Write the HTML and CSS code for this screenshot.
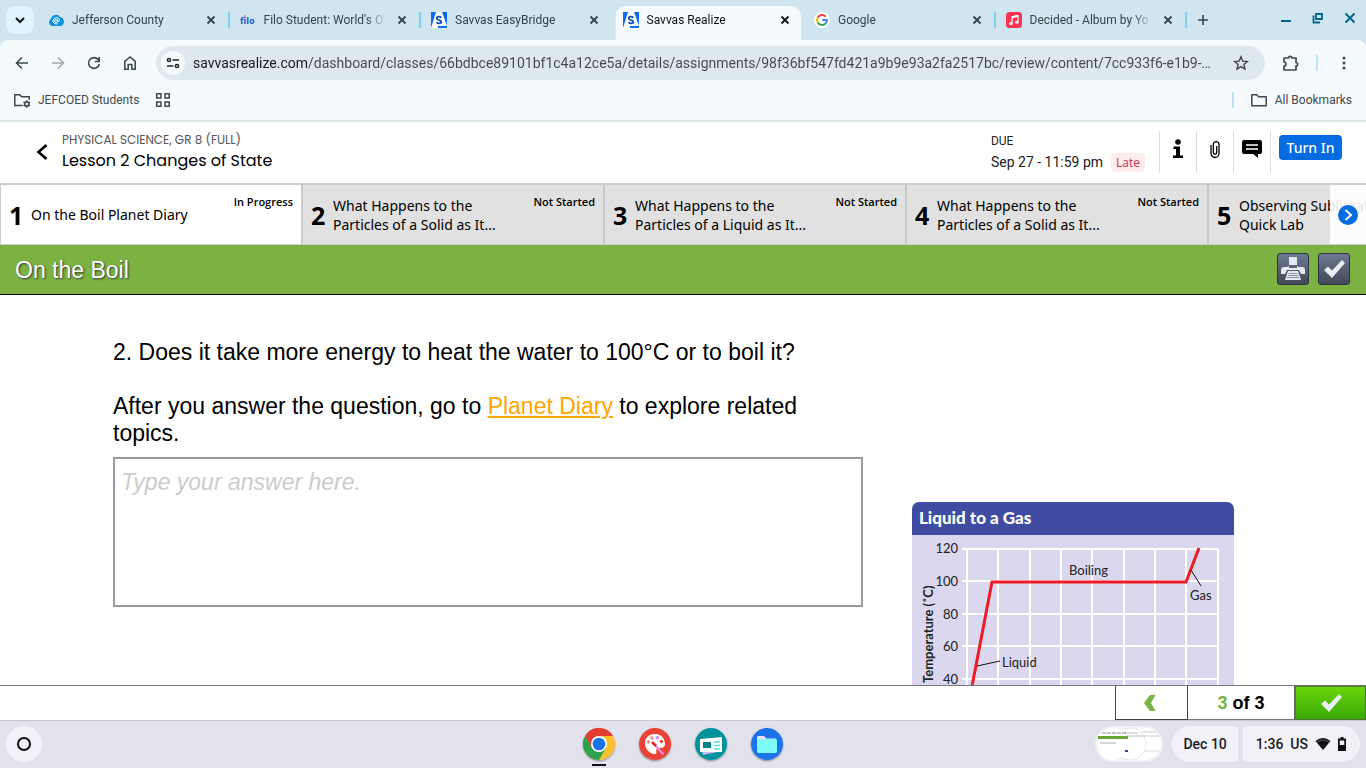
FILE: index.html
```html
<!DOCTYPE html>
<html lang="en">
<head>
    <meta charset="UTF-8">
    <meta name="viewport" content="width=device-width, initial-scale=1.0">
    <title>Savvas Realize</title>
    <link rel="stylesheet" href="styles.css">
</head>
<body>

<!-- shared shapes -->
<svg class="defs" width="0" height="0" aria-hidden="true">
    <symbol id="x" viewBox="0 0 16 16"><path d="M4.500 4.500l7 7M11.500 4.500l-7 7" fill="none" stroke="currentColor" stroke-width="1.800"/></symbol>
    <symbol id="savvas" viewBox="0 0 16 16">
        <rect width="16" height="16" fill="#0a6cf0"/>
        <path d="M5 0h6l5 14H7v2H0z" fill="#fff"/>
        <path d="M10.300 5.600C9.600 4.900 8.700 4.700 7.900 4.700c-1.300 0-2.200.6-2.200 1.600 0 2.300 4.700 1.200 4.700 3.500 0 1-.9 1.600-2.300 1.600-1 0-2-.3-2.700-1" fill="none" stroke="#1450b8" stroke-width="1.800"/>
    </symbol>
    <symbol id="folder" viewBox="0 0 18 16"><path d="M1.800 2.800h5l1.800 1.900h7.600v9H1.800z" fill="none" stroke="currentColor" stroke-width="1.500" stroke-linejoin="round"/></symbol>
    <symbol id="check" viewBox="0 0 24 24"><path d="M2 13l4-3.500 4 4L20 3l3 3-13 15z" fill="#e9edf4"/></symbol>
</svg>

<header class="browser">
    <div class="tab-strip">
        <button class="tab-search" aria-label="Search tabs"><svg width="12" height="12" viewBox="0 0 12 12"><path d="M2 4l4 4 4-4" fill="none" stroke="#111" stroke-width="2"/></svg></button>
        <div class="tabs">
            <div class="tab">
                <svg width="16" height="16" viewBox="0 0 16 16"><path d="M4 14a4 4 0 0 1-1-7.300A5 5 0 0 1 12 5a4.600 4.600 0 0 1 .5 9z" fill="#0a93dc"/><circle cx="8" cy="9" r="1.500" fill="none" stroke="#fff"/><path d="M9.700 7.500c-.5 3 1.600 2.300 1.700.5C11 4.500 5 5 5 9c.2 3 3.300 3.500 5 2.500" fill="none" stroke="#fff"/></svg>
                <span class="tab-title">Jefferson County</span>
                <button class="tab-close" aria-label="Close"><svg width="16" height="16"><use href="#x"/></svg></button>
            </div>
            <div class="tab">
                <svg width="16" height="16" viewBox="0 0 16 16"><text x="0" y="12" class="filo">filo</text><circle cx="5" cy="4" r="1" fill="#f58220"/></svg>
                <span class="tab-title">Filo Student: World's O</span>
                <button class="tab-close" aria-label="Close"><svg width="16" height="16"><use href="#x"/></svg></button>
            </div>
            <div class="tab no-line">
                <svg width="16" height="16"><use href="#savvas"/></svg>
                <span class="tab-title">Savvas EasyBridge</span>
                <button class="tab-close" aria-label="Close"><svg width="16" height="16"><use href="#x"/></svg></button>
            </div>
            <div class="tab active no-line">
                <svg width="16" height="16"><use href="#savvas"/></svg>
                <span class="tab-title">Savvas Realize</span>
                <button class="tab-close" aria-label="Close"><svg width="16" height="16"><use href="#x"/></svg></button>
            </div>
            <div class="tab">
                <svg width="16" height="16" viewBox="0 0 16 16"><circle cx="8" cy="8" r="8" fill="#fff"/><g fill="none" stroke-width="2"><path d="M11.800 4.700A5 5 0 0 0 3.700 5.500" stroke="#ea4335"/><path d="M3.700 5.500a5 5 0 0 0 0 5" stroke="#fbbc05"/><path d="M3.700 10.500a5 5 0 0 0 7.600 1.200" stroke="#34a853"/><path d="M11.300 11.700A5 5 0 0 0 13 8H8.200" stroke="#4285f4"/></g></svg>
                <span class="tab-title">Google</span>
                <button class="tab-close" aria-label="Close"><svg width="16" height="16"><use href="#x"/></svg></button>
            </div>
            <div class="tab">
                <svg width="16" height="16" viewBox="0 0 16 16"><rect width="16" height="16" rx="3.500" fill="#fb3350"/><path d="M6 11.500V4.800l6-1.300v6.800" fill="none" stroke="#fff" stroke-width="1.200"/><path d="M6 4.300l6-1.300v2L6 6.300z" fill="#fff"/><ellipse cx="4.900" cy="11.700" rx="1.700" ry="1.400" fill="#fff"/><ellipse cx="10.900" cy="10.400" rx="1.700" ry="1.400" fill="#fff"/></svg>
                <span class="tab-title">Decided - Album by Yo</span>
                <button class="tab-close" aria-label="Close"><svg width="16" height="16"><use href="#x"/></svg></button>
            </div>
        </div>
        <button class="new-tab" aria-label="New tab"><svg width="12" height="12" viewBox="0 0 12 12"><path d="M6 1v10M1 6h10" stroke="#33444c" stroke-width="1.600"/></svg></button>
        <div class="window-buttons">
            <button aria-label="Minimize"><svg width="12" height="12" viewBox="0 0 12 12"><path d="M1 9h10" stroke="#00668a" stroke-width="2"/></svg></button>
            <button aria-label="Restore"><svg width="12" height="12" viewBox="0 0 12 12"><path d="M4 2h6v5H4zM1.500 3.500V10.500H8" fill="none" stroke="#00668a" stroke-width="1.800"/></svg></button>
            <button aria-label="Close window"><svg width="12" height="12" viewBox="0 0 12 12"><path d="M1.500 1.500l9 9M10.500 1.500l-9 9" stroke="#00668a" stroke-width="2"/></svg></button>
        </div>
    </div>

    <div class="toolbar">
        <button class="tool" aria-label="Back"><svg width="16" height="16" viewBox="0 0 16 16"><path d="M14 8H3M8 2.500L2.500 8 8 13.500" fill="none" stroke="#3a4b53" stroke-width="1.600"/></svg></button>
        <button class="tool" aria-label="Forward"><svg width="16" height="16" viewBox="0 0 16 16"><path d="M2 8h11M8 2.500L13.500 8 8 13.500" fill="none" stroke="#a5a9ac" stroke-width="1.600"/></svg></button>
        <button class="tool" aria-label="Reload"><svg width="16" height="16" viewBox="0 0 16 16"><path d="M13.300 9A5.400 5.400 0 1 1 12.500 5M13.200 2v4.500H8.800" fill="none" stroke="#3a4b53" stroke-width="1.600"/></svg></button>
        <button class="tool" aria-label="Home"><svg width="16" height="16" viewBox="0 0 16 16"><path d="M2.800 6.300L8 2l5.200 4.300v8H9.800V9.500H6.200v4.800H2.800z" fill="none" stroke="#3a4b53" stroke-width="1.600"/></svg></button>
        <div class="omnibox">
            <button class="site-info" aria-label="Site information"><svg width="14" height="14" viewBox="0 0 14 14"><g fill="none" stroke="#222" stroke-width="1.500"><circle cx="3" cy="4" r="1.600"/><path d="M6.500 4H13M1 10h6.500"/><circle cx="11" cy="10" r="1.600"/></g></svg></button>
            <input class="address" type="text" aria-label="Address" value="savvasrealize.com/dashboard/classes/66bdbce89101bf1c4a12ce5a/details/assignments/98f36bf547fd421a9b9e93a2fa2517bc/review/content/7cc933f6-e1b9-…">
            <button class="star" aria-label="Bookmark this page"><svg width="16" height="16" viewBox="0 0 16 16"><path d="M8 1.800l1.800 4.300 4.600.4-3.500 3 1.100 4.500-4-2.400L4 14l1.100-4.500-3.500-3 4.600-.4z" fill="none" stroke="#444" stroke-width="1.400"/></svg></button>
        </div>
        <button class="tool extensions" aria-label="Extensions"><svg width="18" height="18" viewBox="0 0 18 18"><path d="M2 4h4.500a1.700 1.700 0 1 1 3.400 0H14v4.500a1.700 1.700 0 1 1 0 3.400V16H2v-4a2 2 0 0 0 0-4z" fill="none" stroke="#3a4b53" stroke-width="1.700" stroke-linejoin="round"/></svg></button>
        <span class="divider"></span>
        <button class="tool menu" aria-label="Menu"><svg width="16" height="16" viewBox="0 0 16 16" fill="#3a4b53"><circle cx="8" cy="3" r="1.500"/><circle cx="8" cy="8" r="1.500"/><circle cx="8" cy="13" r="1.500"/></svg></button>
    </div>

    <div class="bookmarks">
        <a class="bookmark" href="#"><svg width="18" height="16" viewBox="0 0 18 16"><path d="M9.500 13.500H1.800V2.800h5l1.800 1.900h7.600v3" fill="none" stroke="#444" stroke-width="1.500"/><circle cx="13.700" cy="12" r="2.100" fill="none" stroke="#444" stroke-width="1.600"/><path d="M13.700 8.300v1.500M13.700 14.300v1.500M10.500 10.100l1.300.8M15.700 13.100l1.300.8M10.500 13.900l1.300-.8M15.700 10.900l1.300-.8" stroke="#444" stroke-width="1.400"/></svg>JEFCOED Students</a>
        <a class="bookmark" href="#" aria-label="Apps"><svg width="16" height="16" viewBox="0 0 16 16"><path d="M1.700 1.700h4.200v4.200H1.700zM10 1.700h4.200v4.200H10zM1.700 10h4.200v4.200H1.700zM10 10h4.200v4.200H10z" fill="none" stroke="#444" stroke-width="1.500"/></svg></a>
        <span class="divider push"></span>
        <a class="bookmark" href="#"><svg width="18" height="16"><use href="#folder"/></svg>All Bookmarks</a>
    </div>
</header>

<section class="lesson-header">
    <button class="back" aria-label="Back"><svg width="12" height="18" viewBox="0 0 12 18"><path d="M10.500 2L2.500 9l8 7" fill="none" stroke="#000" stroke-width="2.600"/></svg></button>
    <div class="lesson-name">
        <p>PHYSICAL SCIENCE, GR 8 (FULL)</p>
        <h1>Lesson 2 Changes of State</h1>
    </div>
    <div class="due">
        <p>DUE</p>
        <p class="due-date">Sep 27 - 11:59 pm <span class="late">Late</span></p>
    </div>
    <div class="lesson-tools">
        <button aria-label="Information"><svg width="12" height="20" viewBox="0 0 12 20"><circle cx="6" cy="3" r="2.800"/><path d="M1.500 7.500H8v9h3V19H1v-2.500h3V10H1.500z"/></svg></button>
        <button aria-label="Attachments"><svg width="10" height="20" viewBox="0 0 10 20"><path d="M6.700 7v6.500a1.700 1.700 0 0 1-3.400 0V5a2.900 2.900 0 0 1 5.700 0v9.500a4 4 0 0 1-8 0V6" fill="none" stroke="#000" stroke-width="1.300"/></svg></button>
        <button aria-label="Comments"><svg width="20" height="20" viewBox="0 0 20 20"><path d="M2 1h16a2 2 0 0 1 2 2v10a2 2 0 0 1-2 2h-2v4l-5-4H2a2 2 0 0 1-2-2V3a2 2 0 0 1 2-2z"/><path d="M4 6h12M4 10h12" stroke="#fff" stroke-width="1.600"/></svg></button>
    </div>
    <button class="turn-in">Turn In</button>
</section>

<nav class="activities">
    <a class="activity current" href="#"><b>1</b><span class="activity-name">On the Boil Planet Diary</span><span class="status">In Progress</span></a>
    <a class="activity" href="#"><b>2</b><span class="activity-name">What Happens to the Particles of a Solid as It...</span><span class="status">Not Started</span></a>
    <a class="activity" href="#"><b>3</b><span class="activity-name">What Happens to the Particles of a Liquid as It...</span><span class="status">Not Started</span></a>
    <a class="activity" href="#"><b>4</b><span class="activity-name">What Happens to the Particles of a Solid as It...</span><span class="status">Not Started</span></a>
    <a class="activity" href="#"><b>5</b><span class="activity-name">Observing Sublimation Quick Lab</span></a>
    <button class="next-activities" aria-label="More activities"><svg width="20" height="20" viewBox="0 0 20 20"><circle cx="10" cy="10" r="10" fill="#056be0"/><path d="M7.500 5l5.500 5-5.500 5" fill="none" stroke="#fff" stroke-width="2"/></svg></button>
</nav>

<div class="title-bar">
    <h2>On the Boil</h2>
    <button class="square" aria-label="Print"><svg width="24" height="24" viewBox="0 0 24 24" fill="#e4e8f0"><path d="M8 0h8v8H8z"/><path d="M0 17v-4a3 3 0 0 1 3-3h3l2-1v2h8V9l2 1h3a3 3 0 0 1 3 3v4h-4l-2-4H6l-2 4z"/><path d="M7 14h10l3 9H4z"/><path d="M7.500 16.500h9M7 18.500h10M6 20.500h12" stroke="#8890a0"/></svg></button>
    <button class="square" aria-label="Check"><svg width="24" height="24"><use href="#check"/></svg></button>
</div>

<main class="content">
    <div class="question">
        <p>2. Does it take more energy to heat the water to 100°C or to boil it?</p>
        <p><label for="answer">After you answer the question, go to <a href="#">Planet Diary</a> to explore related topics.</label></p>
        <textarea id="answer" placeholder="Type your answer here."></textarea>
    </div>
    <svg class="chart" width="322" height="200" viewBox="0 0 322 200" role="img" aria-label="Liquid to a Gas">
        <path d="M0 200V7a7 7 0 0 1 7-7h308a7 7 0 0 1 7 7v193z" fill="#dad7ee"/>
        <path d="M0 33V7a7 7 0 0 1 7-7h308a7 7 0 0 1 7 7v26z" fill="#404ca2"/>
        <text class="chart-title" x="7" y="22">Liquid to a Gas</text>
        <path d="M50 47H306M50 79H306M50 112H306M50 144H306M50 177H306M55 47V200M86 47V200M118 47V200M149 47V200M180 47V200M212 47V200M243 47V200M274 47V200M306 47V200" stroke="#fff" stroke-width="2"/>
        <g class="ticks">
            <text x="46" y="51">120</text>
            <text x="46" y="84">100</text>
            <text x="46" y="117">80</text>
            <text x="46" y="149">60</text>
            <text x="46" y="182">40</text>
        </g>
        <text class="axis" transform="translate(21 181) rotate(-90)">Temperature (˚C)</text>
        <path d="M57 200L80 80H274L287 46" fill="none" stroke="#ed1c24" stroke-width="3"/>
        <path d="M65 164l23-5M279 68l10 16" stroke="#111"/>
        <text x="157" y="73">Boiling</text>
        <text x="278" y="98">Gas</text>
        <text x="90" y="165">Liquid</text>
    </svg>
</main>

<footer class="pager">
    <button class="pager-back" aria-label="Previous"><svg width="12" height="18" viewBox="0 0 12 18"><path d="M6 1h5.500L7 9l4.500 8H6L0 9z" fill="#7bb241"/></svg></button>
    <p class="pager-count"><span>3</span> of 3</p>
    <button class="pager-done" aria-label="Done"><svg width="24" height="24"><use href="#check"/></svg></button>
</footer>

<div class="shelf">
    <button class="launcher" aria-label="Launcher"><svg width="14" height="14" viewBox="0 0 14 14"><circle cx="7" cy="7" r="6" fill="none" stroke="#111" stroke-width="2"/></svg></button>
    <div class="apps">
        <button class="app open" aria-label="Chrome"><svg width="32" height="32" viewBox="0 0 32 32"><circle cx="16" cy="16" r="16" fill="#fbc02d"/><path d="M2.100 8A16 16 0 0 1 29.900 8H16l-7 12z" fill="#e53c31"/><path d="M2.100 8A16 16 0 0 0 16 32l7-12H9z" fill="#2ea24c"/><circle cx="16" cy="16" r="8" fill="#fff"/><circle cx="16" cy="16" r="6.300" fill="#1a73e8"/></svg></button>
        <button class="app" aria-label="Canvas"><svg width="32" height="32" viewBox="0 0 32 32"><circle cx="16" cy="16" r="16" fill="#ea4335"/><path d="M16 6C9 6 5.500 11 6 16c.5 6 6 10.500 10 10 3-.5 0-4 2-5.500 2.500-1.500 8 1 8-4.500C26 10 21.500 6 16 6z" fill="#fff"/><circle cx="9.500" cy="14" r="1.700" fill="#f28b82"/><circle cx="13" cy="10" r="1.700" fill="#f28b82"/><circle cx="18.500" cy="9.800" r="1.700" fill="#c58af9"/><circle cx="22.500" cy="13.500" r="1.700" fill="#ea4335"/><path d="M13.500 14.500l11 12" stroke="#f28be0" stroke-width="2.200"/><path d="M13 14l4 4" stroke="#d93025" stroke-width="2.500"/></svg></button>
        <button class="app" aria-label="News"><svg width="32" height="32" viewBox="0 0 32 32"><circle cx="16" cy="16" r="16" fill="#00939b"/><path d="M7 23l1 4 15-3z" fill="#c7b8f5"/><path d="M5 11l22-2v15L5 24z" fill="#fff"/><path d="M8 14h8v6H8z" fill="#00838b"/><path d="M19 14h6M19 17.500h6M19 21h6" stroke="#5ce1e6" stroke-width="1.600"/></svg></button>
        <button class="app" aria-label="Files"><svg width="32" height="32" viewBox="0 0 32 32"><circle cx="16" cy="16" r="16" fill="#1a73e8"/><path d="M6 9.500a1.500 1.500 0 0 1 1.500-1.500H13l2.500 2.500H25V16H6z" fill="#e8e4fb"/><rect x="6" y="11" width="20" height="14" rx="1.500" fill="#7df9f9"/></svg></button>
    </div>
    <div class="tray">
        <button class="captures" aria-label="Recent captures"><svg width="68" height="36" viewBox="0 0 68 36"><rect width="68" height="36" rx="18" fill="#f2f1f7"/><circle cx="50" cy="18" r="16" fill="#fff"/><path d="M39 6h22M36 10h28" stroke="#ccc"/><path d="M36 25h28" stroke="#ddd"/><circle cx="35" cy="18" r="16" fill="#fff" stroke="#e8e8e8"/><path d="M25 7h18M26 10h24" stroke="#bbb"/><circle cx="18" cy="18" r="16" fill="#fff"/><path d="M7 7h24" stroke="#888" stroke-dasharray="4 1"/><path d="M3 10h30v3H3z" fill="#6aa637"/><path d="M5 17h16" stroke="#aaa"/><path d="M30 24h3v2h-3z" fill="#2443b5"/></svg></button>
        <button class="date">Dec 10</button>
        <button class="clock">1:36 <span>US</span>
            <svg width="16" height="14" viewBox="0 0 16 14"><path d="M8 13L.5 4Q8-2 15.500 4z" fill="#111"/><path d="M2 5q6-4 12 0" fill="none" stroke="#777" stroke-width=".7"/></svg>
            <svg width="8" height="14" viewBox="0 0 8 14"><path d="M2.500 0h3v1.500H8V14H0V1.500h2.500z" fill="#111"/><path d="M1.700 3.500h4.600V8H1.700z" fill="#f2f1f7"/></svg>
        </button>
    </div>
</div>

</body>
</html>
```
FILE: styles.css
```css
* {
    box-sizing: border-box;
}
body {
    margin: 0;
    height: 100vh;
    display: flex;
    flex-direction: column;
    overflow: hidden;
    background-color: #fff;
    font-family: Roboto, Arial, sans-serif;
    color: #000;
}
h1, h2, p {
    margin: 0;
    font-weight: normal;
}
a {
    color: inherit;
    text-decoration: none;
}
button {
    display: flex;
    align-items: center;
    justify-content: center;
    flex-shrink: 0;
    padding: 0;
    border: 0;
    background: none;
    font: inherit;
    color: inherit;
}
svg {
    flex-shrink: 0;
}
.defs {
    position: absolute;
}

/* browser window */
.browser {
    flex-shrink: 0;
    background-color: #cfe5ef;
    border-bottom: 2px solid #dde5e9;
}
.tab-strip {
    display: flex;
    height: 40px;
    padding-left: 6px;
}
.tab-search {
    width: 28px;
    height: 28px;
    margin: 6px 4px 0 0;
    border-radius: 9px;
    background-color: #dff3ff;
}
.tabs {
    display: flex;
    flex: 0 1 1149px;
    min-width: 0;
}
.tab {
    position: relative;
    display: flex;
    align-items: center;
    flex: 1;
    min-width: 0;
    padding: 0 11px 0 10px;
    font-size: 12px;
    color: #33444c;
}
.tab::after {
    content: "";
    position: absolute;
    right: 0;
    top: 12px;
    width: 2px;
    height: 16px;
    background-color: #7fd0f5;
}
.tab.no-line::after {
    display: none;
}
.tab:nth-child(2)::after {
    display: block;
}
.tab.active {
    margin-top: 6px;
    padding-bottom: 6px;
    color: #111;
    background-color: #f5fafd;
    clip-path: inset(0 3px 0 3px round 10px 10px 0 0);
}
.tab-title {
    flex: 1;
    margin: 0 8px;
    overflow: hidden;
    white-space: nowrap;
    -webkit-mask-image: linear-gradient(90deg, #000 calc(100% - 20px), transparent);
    mask-image: linear-gradient(90deg, #000 calc(100% - 20px), transparent);
}
.filo {
    font: bold 9px "Open Sans", sans-serif;
    fill: #2456d6;
}
.new-tab {
    width: 32px;
}
.window-buttons {
    display: flex;
    height: 36px;
    margin-left: auto;
}
.window-buttons button {
    width: 32px;
}
.toolbar {
    display: flex;
    align-items: center;
    height: 46px;
    padding: 0 4px;
    background-color: #f5fafd;
    border-radius: 8px 8px 0 0;
}
.tool {
    width: 36px;
    height: 36px;
}
.omnibox {
    display: flex;
    align-items: center;
    flex: 1;
    height: 34px;
    margin: 0 8px;
    padding: 0 16px 0 5px;
    border-radius: 17px;
    background-color: #dde9ef;
}
.site-info {
    width: 24px;
    height: 24px;
    border-radius: 12px;
    background-color: #f5fafd;
}
.address {
    flex: 1;
    min-width: 0;
    margin: 0 8px;
    padding: 0;
    border: 0;
    font: 14px Roboto, Arial, sans-serif;
    color: transparent;
    background: linear-gradient(90deg, #16191b 115px, #43484b 115px);
    -webkit-background-clip: text;
    background-clip: text;
}
.divider {
    width: 2px;
    height: 16px;
    background-color: #b9e4fb;
}
.menu {
    margin-left: 8px;
}
.extensions {
    margin-right: 7px;
}
.bookmarks {
    display: flex;
    align-items: center;
    gap: 16px;
    height: 34px;
    padding: 0 14px 6px 13px;
    background-color: #f5fafd;
    font-size: 12px;
    color: #43484b;
}
.bookmark {
    display: flex;
    align-items: center;
    gap: 7px;
}
.push {
    margin-left: auto;
}

/* lesson header */
.lesson-header {
    display: flex;
    flex-shrink: 0;
    height: 61px;
    padding: 9px 24px 0 36px;
}
.back {
    width: 12px;
    height: 42px;
    margin-right: 14px;
}
.lesson-name {
    flex: 1;
    font-family: Poppins, Lato, sans-serif;
    font-size: 12px;
    line-height: 18px;
    color: #555;
}
.lesson-name h1 {
    font-size: 16px;
    line-height: 24px;
    color: #000;
}
.due {
    margin-right: 14px;
    font-size: 12px;
    line-height: 20px;
    color: #222;
}
.due-date {
    display: flex;
    align-items: center;
    gap: 8px;
    font-size: 14px;
    line-height: 22px;
}
.late {
    padding: 0 5px;
    border-radius: 4px;
    background-color: #ffecec;
    font: 12px/19px "Open Sans", sans-serif;
    color: #c9304a;
}
.lesson-tools {
    display: flex;
    height: 42px;
    border-right: 1px solid #ddd;
}
.lesson-tools button {
    width: 37px;
    padding-bottom: 6px;
    border-left: 1px solid #ddd;
}
.turn-in {
    width: 63px;
    height: 25px;
    margin: 4px 0 0 8px;
    border-radius: 4px;
    background-color: #056be0;
    font: 500 14px "Noto Sans", sans-serif;
    color: #fff;
}

/* activity strip */
.activities {
    position: relative;
    display: flex;
    flex-shrink: 0;
    height: 62px;
    overflow: hidden;
    border-top: 2px solid #ccc;
    border-bottom: 1px solid #ccc;
    border-left: 1px solid #ccc;
    font-family: "Noto Sans", sans-serif;
}
.activity {
    display: flex;
    align-items: center;
    flex: 0 0 302px;
    padding: 0 8px;
    border-right: 2px solid #c8c8c8;
    background-color: #e1e1e1;
}
.activity.current {
    background-color: #fff;
}
.activity b {
    width: 22px;
    font-family: "Open Sans", sans-serif;
    font-size: 25px;
}
.activity-name {
    flex: 0 1 175px;
    font-size: 14px;
    line-height: 19px;
}
.status {
    align-self: flex-start;
    margin: 9px 0 0 auto;
    font-family: "Open Sans", sans-serif;
    font-size: 11px;
    font-weight: 600;
    line-height: 16px;
    white-space: nowrap;
}
.next-activities {
    position: absolute;
    top: 0;
    right: 0;
    width: 36px;
    height: 100%;
    background-color: rgba(255, 255, 255, 0.9);
}

/* title bar */
.title-bar {
    display: flex;
    align-items: center;
    flex-shrink: 0;
    gap: 9px;
    height: 50px;
    padding: 0 16px 1px 15px;
    background-color: #7bb241;
    border-bottom: 1px solid #000;
    font-family: "Liberation Sans", Arial, sans-serif;
}
.title-bar h2 {
    flex: 1;
    padding-top: 2px;
    font-size: 23px;
    color: #fff;
    text-shadow: 1px 1px 2px #333;
}
.square {
    width: 32px;
    height: 32px;
    border: 1px solid #2c3340;
    border-radius: 3px;
    background: linear-gradient(#6c7a92, #414955);
}

/* question */
.content {
    display: flex;
    align-items: flex-start;
    flex: 1;
    min-height: 0;
    overflow: hidden;
    padding: 44px 113px 0;
    font-family: "Liberation Sans", Arial, sans-serif;
    font-size: 23px;
    line-height: 27px;
}
.question {
    flex: 0 1 750px;
}
.question p {
    margin-bottom: 27px;
}
.question p + p {
    margin-bottom: 10px;
}
.question a {
    color: orange;
    text-decoration: underline;
}
.question textarea {
    display: block;
    width: 100%;
    height: 150px;
    padding: 10px 6px;
    border: 2px solid #999;
    font: inherit;
    resize: none;
}
.question textarea::placeholder {
    font-style: italic;
    color: #ccc;
}
.chart {
    margin: 163px 0 0 49px;
    font-family: Lato, sans-serif;
    font-size: 13px;
    fill: #222;
}
.chart-title {
    font-size: 17px;
    font-weight: 900;
    fill: #fff;
}
.ticks {
    text-anchor: end;
}
.axis {
    font-weight: bold;
}

/* pager */
.pager {
    display: flex;
    justify-content: flex-end;
    flex-shrink: 0;
    height: 35px;
    border-top: 1px solid #777;
    font-family: "Liberation Sans", Arial, sans-serif;
    font-size: 18px;
}
.pager-back {
    width: 73px;
    padding-right: 4px;
    border: 1px solid #444;
    border-top: 0;
}
.pager-count {
    width: 106px;
    font-weight: bold;
    line-height: 34px;
    text-align: center;
    border-bottom: 1px solid #777;
}
.pager-count span {
    color: #7bb241;
}
.pager-done {
    width: 72px;
    border: 1px solid #4a7a2a;
    border-left: 2px solid #666;
    background: linear-gradient(#6bd60a, #37a805);
}

/* shelf */
.shelf {
    display: grid;
    grid-template-columns: 1fr auto 1fr;
    align-items: center;
    flex-shrink: 0;
    height: 48px;
    padding: 0 6px;
    background-color: #e2e2ec;
    box-shadow: inset 0 1px #c9c9d3;
}
.launcher {
    width: 36px;
    height: 36px;
    border-radius: 18px;
    background-color: #f2f1f7;
}
.apps {
    display: flex;
    gap: 24px;
}
.app {
    position: relative;
    border-radius: 50%;
    box-shadow: 0 1px 2px rgba(0, 0, 0, 0.4);
}
.app.open::after {
    content: "";
    position: absolute;
    bottom: -6px;
    width: 14px;
    height: 2px;
    background-color: #111;
}
.tray {
    display: flex;
    justify-content: flex-end;
    font-size: 14px;
    font-weight: 500;
    color: #1b1b1f;
}
.captures {
    margin-right: 9px;
}
.date {
    height: 36px;
    margin-right: 5px;
    padding: 0 11px;
    border-radius: 18px 4px 4px 18px;
    background-color: #f2f1f7;
}
.clock {
    gap: 7px;
    height: 36px;
    padding: 0 14px 0 13px;
    border-radius: 4px 18px 18px 4px;
    background-color: #f2f1f7;
}
```
